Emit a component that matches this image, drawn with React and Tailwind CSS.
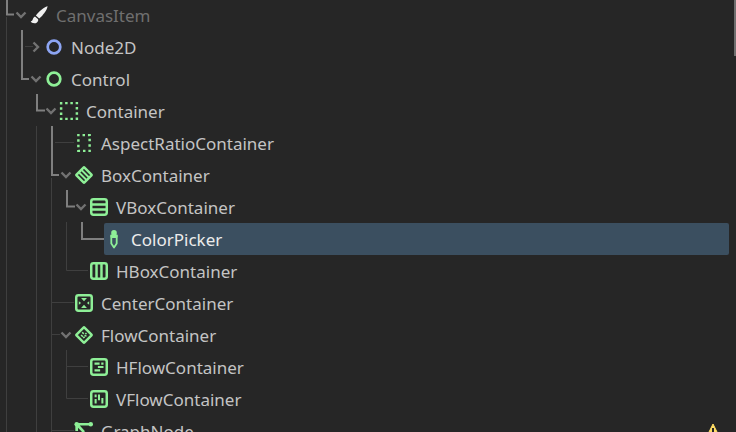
const GREEN = "#8eef97";

function Icon({ children }) {
    return (
        <svg width="18" height="18" viewBox="0 0 16 16" fill="none" className="-m-px shrink-0 overflow-visible">
            {children}
        </svg>
    );
}

const Brush = () => (
    <Icon>
        <path d="M15.4 0.2c-2.8 0.8-7.6 4.6-10.2 8.2l3 2.8c3.2-2.8 7-7.8 7.4-10.8z" fill="#f0f0f0" />
        <path d="M4.4 9.4c-2 0.8-1.6 2.8-2.6 3.6-0.5 0.4-1.2 0.6-1.2 0.6 0.4 1.8 4 2.4 5.6 1 1.2-1 1.4-2.4 0.8-3z" fill="#f0f0f0" />
    </Icon>
);

const Ring = ({ color }) => (
    <Icon>
        <circle cx="8" cy="8" r="5.6" stroke={color} strokeWidth="2.4" />
    </Icon>
);

const DottedBox = () => (
    <Icon>
        <path
            d="M1 1h14v14H1z"
            stroke={GREEN}
            strokeWidth="2.2"
            strokeDasharray="2.2 2.46"
            strokeDashoffset="1.1"
        />
    </Icon>
);

const DottedTall = () => (
    <Icon>
        <path
            d="M3 1h10v14H3z"
            stroke={GREEN}
            strokeWidth="2.2"
            strokeDasharray="2.2 2.6"
            strokeDashoffset="1.1"
        />
    </Icon>
);

const BoxIcon = () => (
    <Icon>
        <g transform="rotate(45 8 8)">
            <rect x="3" y="3" width="10" height="10" rx="0.6" stroke={GREEN} strokeWidth="2.2" />
            <path d="M3 6.4h10M3 9.6h10" stroke={GREEN} strokeWidth="1.7" />
        </g>
    </Icon>
);

const VBox = () => (
    <Icon>
        <rect x="1.1" y="1.1" width="13.8" height="13.8" rx="2" stroke={GREEN} strokeWidth="2.2" />
        <path d="M1 5.8h14M1 10.2h14" stroke={GREEN} strokeWidth="2.2" />
    </Icon>
);

const HBox = () => (
    <Icon>
        <rect x="1.1" y="1.1" width="13.8" height="13.8" rx="2" stroke={GREEN} strokeWidth="2.2" />
        <path d="M5.8 1v14M10.2 1v14" stroke={GREEN} strokeWidth="2.2" />
    </Icon>
);

const Dropper = () => (
    <Icon>
        <circle cx="8" cy="2.6" r="2.5" fill={GREEN} />
        <rect x="4.6" y="4" width="6.8" height="3" rx="1" fill={GREEN} />
        <path d="M5.6 6.5v5.5l2.4 3.6 2.4-3.6v-5.5" stroke={GREEN} strokeWidth="1.6" strokeLinejoin="round" />
    </Icon>
);

const Center = () => (
    <Icon>
        <rect x="1.1" y="1.1" width="13.8" height="13.8" rx="2" stroke={GREEN} strokeWidth="2.2" />
        <path d="M5.4 3.6h5.2L8 6.4zM5.4 12.4h5.2L8 9.6zM3.4 6.4v3.2L5.4 8zM12.6 6.4v3.2L10.6 8z" fill={GREEN} />
    </Icon>
);

const Flow = () => (
    <Icon>
        <rect x="3" y="3" width="10" height="10" rx="0.6" stroke={GREEN} strokeWidth="2.2" transform="rotate(45 8 8)" />
        <path d="M6.4 5.6l1.4 1.4M9.2 6.2l1 1M5.4 8l1.6 1.6M8.4 8.4l1.8 0.4M7.2 10.6l1.4-0.8" stroke={GREEN} strokeWidth="1.4" />
    </Icon>
);

const HFlow = () => (
    <Icon>
        <rect x="1.1" y="1.1" width="13.8" height="13.8" rx="2" stroke={GREEN} strokeWidth="2.2" />
        <path d="M4 5h4.5M10 5h2M7 8h5M4 11h5" stroke={GREEN} strokeWidth="1.8" />
    </Icon>
);

const VFlow = () => (
    <Icon>
        <rect x="1.1" y="1.1" width="13.8" height="13.8" rx="2" stroke={GREEN} strokeWidth="2.2" />
        <path d="M5 4v2.5M5 8v4M8 4v5M11 7v5" stroke={GREEN} strokeWidth="1.8" />
    </Icon>
);

const GraphIcon = () => (
    <Icon>
        <path d="M1.5 2l6.5 7M1.5 2l12.5 0M1.5 2l0 6" stroke={GREEN} strokeWidth="2.4" />
        <circle cx="1.5" cy="2" r="2" fill={GREEN} />
        <circle cx="14" cy="2" r="2" fill={GREEN} />
    </Icon>
);

const rows = [
    { name: "CanvasItem", pad: "pl-[11px]", icon: <Brush />, arrow: "down", dim: true },
    { name: "Node2D", pad: "pl-[26px]", icon: <Ring color="#8da5f3" />, arrow: "right" },
    { name: "Control", pad: "pl-[26px]", icon: <Ring color={GREEN} />, arrow: "down" },
    { name: "Container", pad: "pl-[41px]", icon: <DottedBox />, arrow: "down" },
    { name: "AspectRatioContainer", pad: "pl-[56px]", icon: <DottedTall /> },
    { name: "BoxContainer", pad: "pl-[56px]", icon: <BoxIcon />, arrow: "down" },
    { name: "VBoxContainer", pad: "pl-[71px]", icon: <VBox />, arrow: "down" },
    { name: "ColorPicker", pad: "pl-[86px]", icon: <Dropper />, selected: true },
    { name: "HBoxContainer", pad: "pl-[71px]", icon: <HBox /> },
    { name: "CenterContainer", pad: "pl-[56px]", icon: <Center /> },
    { name: "FlowContainer", pad: "pl-[56px]", icon: <Flow />, arrow: "down" },
    { name: "HFlowContainer", pad: "pl-[71px]", icon: <HFlow /> },
    { name: "VFlowContainer", pad: "pl-[71px]", icon: <VFlow /> },
    { name: "GraphNode", pad: "pl-[56px]", icon: <GraphIcon />, warning: true },
];

function Arrow({ dir }) {
    return (
        <svg width="12" height="12" viewBox="0 0 12 12" fill="none">
            <path
                d={dir === "down" ? "M1.5 3.5L6 8l4.5-4.5" : "M3.5 1.5L8 6l-4.5 4.5"}
                stroke="#727272"
                strokeWidth="2.4"
            />
        </svg>
    );
}

// guide lines of the tree, they sit over the rows
function TreeLines() {
    const thin = "#3f3f3f";
    const thick = "#7f7f7f";
    return (
        <svg width="736" height="432" className="absolute left-0 top-0 pointer-events-none" fill="none">
            <g stroke={thin} strokeWidth="1">
                <path d="M6.5 17V432" />
                <path d="M25 46.5h8" />
                <path d="M36.5 126V432" />
                <path d="M51.5 178V432" />
                <path d="M55 142.5h19" />
                <path d="M66.5 222V270.5H88" />
                <path d="M51.5 302.5H74" />
                <path d="M51.5 334.5H60" />
                <path d="M66.5 350V398.5H88" />
                <path d="M66.5 366.5H88" />
                <path d="M51.5 430.5H74" />
            </g>
            <g stroke={thick} strokeWidth="2">
                <path d="M7 0V14.5H14" />
                <path d="M22 30V79H29" />
                <path d="M37 94V110.5H45" />
                <path d="M52 126V175H59" />
                <path d="M67 190V206.5H75" />
                <path d="M82 222V239H104" />
            </g>
        </svg>
    );
}

function Row({ row }) {
    return (
        <div className={`flex h-8 items-center pr-[7px] ${row.pad}`}>
            <div className="flex w-5 shrink-0 justify-center">
                {row.arrow && <Arrow dir={row.arrow} />}
            </div>
            <div
                className={`-ml-[2px] flex h-8 min-w-0 flex-1 items-center gap-[9px] rounded-[2px] pl-[2px] ${
                    row.selected ? "bg-[#3b4f60]" : ""
                }`}
            >
                {row.icon}
                <span
                    className={`flex-1 text-[17px] leading-none ${
                        row.dim ? "text-[#6f6f6f]" : row.selected ? "text-[#ececec]" : "text-[#c4c4c4]"
                    }`}
                >
                    {row.name}
                </span>
                {row.warning && (
                    <svg width="16" height="16" viewBox="0 0 16 16" className="mr-[8px] shrink-0 overflow-visible">
                        <path d="M8 1L15 15H1z" fill="#ffdd65" stroke="#ffdd65" strokeLinejoin="round" />
                        <path d="M8 5v5" stroke="#262626" strokeWidth="2" />
                    </svg>
                )}
            </div>
        </div>
    );
}

function App() {
    return (
        <div className="relative h-[432px] w-[736px] overflow-hidden bg-[#262626] font-['Noto_Sans',sans-serif]">
            <div className="-mt-px">
                {rows.map((row) => (
                    <Row key={row.name} row={row} />
                ))}
            </div>
            <TreeLines />
            <div className="absolute right-0 top-0 h-[56px] w-[2px] bg-[#6f6f6f]" />
        </div>
    );
}

export default App;
